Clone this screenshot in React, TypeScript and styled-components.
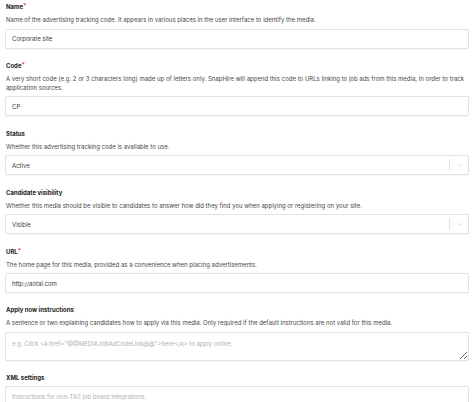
import React from "react";
import styled, { createGlobalStyle } from "styled-components";
import { ChevronDown } from "lucide-react";

const GlobalStyle = createGlobalStyle`
  html, body {
    margin: 0;
    background: #fff;
    font-family: Inter, "Noto Sans", sans-serif;
    color: #2b2b2b;
  }
`;

type Option = { value: string; label: string };

const fields: {
  name: string;
  label: string;
  required?: boolean;
  help?: string;
  kind: "text" | "select" | "textarea";
  value?: string;
  placeholder?: string;
  options?: Option[];
}[] = [
  {
    name: "name",
    label: "Name",
    required: true,
    help: "Name of the advertising tracking code. It appears in various places in the user interface to identify the media.",
    kind: "text",
    value: "Corporate site",
  },
  {
    name: "code",
    label: "Code",
    required: true,
    help: "A very short code (e.g. 2 or 3 characters long) made up of letters only. SnapHire will append this code to URLs linking to job ads from this media, in order to track application sources.",
    kind: "text",
    value: "CP",
  },
  {
    name: "status",
    label: "Status",
    help: "Whether this advertising tracking code is available to use.",
    kind: "select",
    value: "active",
    options: [
      { value: "active", label: "Active" },
      { value: "inactive", label: "Inactive" },
    ],
  },
  {
    name: "visibility",
    label: "Candidate visibility",
    help: "Whether this media should be visible to candidates to answer how did they find you when applying or registering on your site.",
    kind: "select",
    value: "visible",
    options: [
      { value: "visible", label: "Visible" },
      { value: "hidden", label: "Hidden" },
    ],
  },
  {
    name: "url",
    label: "URL",
    required: true,
    help: "The home page for this media, provided as a convenience when placing advertisements.",
    kind: "text",
    value: "http://aotal.com",
  },
  {
    name: "applyNow",
    label: "Apply now instructions",
    help: "A sentence or two explaining candidates how to apply via this media. Only required if the default instructions are not valid for this media.",
    kind: "textarea",
    placeholder: 'e.g. Click <a href="@@MEDIAJobAdCodeLink@@">here</a> to apply online.',
  },
  {
    name: "xml",
    label: "XML settings",
    kind: "text",
    placeholder: "Instructions for non-TAS job board integrations.",
  },
];

export default function App() {
  return (
    <>
      <GlobalStyle />
      <Form>
        {fields.map((f) => (
          <Field key={f.name}>
            <Label htmlFor={f.name}>
              {f.label}
              {f.required && <Required>*</Required>}
            </Label>
            {f.help && <Help>{f.help}</Help>}
            {f.kind === "text" && (
              <Input id={f.name} defaultValue={f.value} placeholder={f.placeholder} />
            )}
            {f.kind === "textarea" && (
              <TextArea id={f.name} placeholder={f.placeholder} />
            )}
            {f.kind === "select" && (
              <SelectBox>
                <Select id={f.name} defaultValue={f.value}>
                  {f.options?.map((o) => (
                    <option key={o.value} value={o.value}>
                      {o.label}
                    </option>
                  ))}
                </Select>
                <Indicator>
                  <ChevronDown size={7} strokeWidth={1.5} />
                </Indicator>
              </SelectBox>
            )}
          </Field>
        ))}
      </Form>
    </>
  );
}

const Form = styled.form`
  padding: 2px 5px 0 5px;
`;

const Field = styled.div`
  display: flex;
  flex-direction: column;
  margin-bottom: 12.4px;
`;

const Label = styled.label`
  font-size: 6px;
  line-height: 9px;
  font-weight: 700;
  color: #222;
  padding-left: 1px;
  margin-bottom: 4px;
`;

/* raised without growing the label's line box */
const Required = styled.span`
  color: #e0475b;
  line-height: 0;
  vertical-align: 1px;
`;

const Help = styled.p`
  margin: 0 0 4.5px 0;
  padding: 0 5px 0 1px;
  font-size: 6px;
  line-height: 9px;
  text-align: justify;
  color: #474747;
`;

const control = `
  box-sizing: border-box;
  width: 100%;
  border: 1px solid #e2e2e2;
  border-radius: 2px;
  background: #fff;
  font-family: Inter, "Noto Sans", sans-serif;
  font-size: 6px;
  color: #3a3a3a;
  padding: 0 6px;
  outline: none;
  box-shadow: 0 0.5px 1px rgba(0, 0, 0, 0.04);
  &::placeholder {
    color: #b0b0b0;
  }
`;

const Input = styled.input`
  ${control}
  height: 20px;
`;

const TextArea = styled.textarea`
  ${control}
  display: block;
  height: 29px;
  padding-top: 6px;
  line-height: 9px;
  resize: vertical;
`;

const SelectBox = styled.div`
  position: relative;
  display: flex;
`;

const Select = styled.select`
  ${control}
  height: 20px;
  appearance: none;
  padding-right: 24px;
`;

const Indicator = styled.span`
  position: absolute;
  top: 4px;
  right: 1px;
  bottom: 4px;
  width: 18px;
  display: flex;
  align-items: center;
  justify-content: center;
  border-left: 1px solid #e2e2e2;
  color: #b3b3b3;
  pointer-events: none;
`;
